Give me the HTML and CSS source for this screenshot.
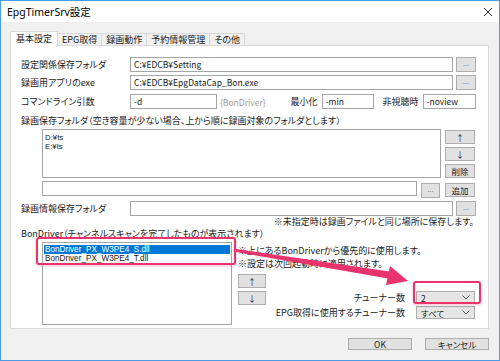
FILE: index.html
```html
<!DOCTYPE html>
<html lang="ja">
<head>
<meta charset="utf-8">
<link rel="stylesheet" href="styles.css">
</head>
<body>
<div class="win">
  <div class="titlebar">
    <span class="title">EpgTimerSrv設定</span>
    <svg class="close" width="10" height="10" viewBox="0 0 10 10"><path d="M1 1L9 9M9 1L1 9" stroke="#222" stroke-width="1"/></svg>
  </div>
  <div class="client">
    <div class="tabs">
      <div class="tab active">基本設定</div>
      <div class="tab">EPG取得</div>
      <div class="tab">録画動作</div>
      <div class="tab">予約情報管理</div>
      <div class="tab">その他</div>
    </div>
    <div class="panel">
      <div class="row r1">
        <span class="lbl">設定関係保存フォルダ</span>
        <div class="input path">C:¥EDCB¥Setting</div>
        <div class="btn dots">...</div>
      </div>
      <div class="row r2">
        <span class="lbl">録画用アプリのexe</span>
        <div class="input path">C:¥EDCB¥EpgDataCap_Bon.exe</div>
        <div class="btn dots">...</div>
      </div>
      <div class="row r3">
        <span class="lbl">コマンドライン引数</span>
        <div class="input arg">-d</div>
        <span class="gray">{BonDriver}</span>
        <span class="lbl2 minlbl">最小化</span>
        <div class="input small">-min</div>
        <span class="lbl2 nvlbl">非視聴時</span>
        <div class="input small2">-noview</div>
      </div>
      <div class="heading h1">録画保存フォルダ（空き容量が少ない場合、上から順に録画対象のフォルダとします）</div>
      <div class="recarea">
        <div class="recleft">
          <div class="listbox reclist">
            <div class="item">D:¥ts</div>
            <div class="item">E:¥ts</div>
          </div>
          <div class="addrow">
            <div class="input addinput"></div>
            <div class="btn dots">...</div>
          </div>
        </div>
        <div class="recbtns">
          <div class="btn side">↑</div>
          <div class="btn side">↓</div>
          <div class="btn side">削除</div>
          <div class="btn side add">追加</div>
        </div>
      </div>
      <div class="row r4">
        <span class="lbl">録画情報保存フォルダ</span>
        <div class="input path">&nbsp;</div>
        <div class="btn dots">...</div>
      </div>
      <div class="note">※未指定時は録画ファイルと同じ場所に保存します。</div>
      <div class="heading h2">BonDriver（チャンネルスキャンを完了したものが表示されます）</div>
      <div class="bonarea">
        <div class="listbox bonlist">
          <div class="item sel">BonDriver_PX_W3PE4_S.dll</div>
          <div class="item">BonDriver_PX_W3PE4_T.dll</div>
        </div>
        <div class="bonright">
          <div class="bnote">※上にあるBonDriverから優先的に使用します。</div>
          <div class="bnote">※設定は次回起動時に適用されます。</div>
          <div class="bonlower">
            <div class="bonbtns">
              <div class="btn side2">↑</div>
              <div class="btn side2">↓</div>
            </div>
            <div class="tuners">
              <span class="tlbl">チューナー数</span>
              <div class="combo"><span>2</span><svg width="8" height="5" viewBox="0 0 8 5"><path d="M0.5 0.5L4 4L7.5 0.5" fill="none" stroke="#555" stroke-width="1"/></svg></div>
              <span class="tlbl">EPG取得に使用するチューナー数</span>
              <div class="combo"><span>すべて</span><svg width="8" height="5" viewBox="0 0 8 5"><path d="M0.5 0.5L4 4L7.5 0.5" fill="none" stroke="#555" stroke-width="1"/></svg></div>
            </div>
          </div>
        </div>
      </div>
    </div>
    <div class="footer">
      <div class="btn fbtn">OK</div>
      <div class="btn fbtn">キャンセル</div>
    </div>
  </div>
  <div class="mark mark1"></div>
  <div class="mark mark2"></div>
  <svg class="arrow" width="500" height="361" viewBox="0 0 500 361">
    <polygon points="236,249 236,252 391,279 393,272" fill="#e8336d"/>
    <polygon points="408,281 386,285 390,266" fill="#e8336d"/>
  </svg>
</div>
</body>
</html>
```

FILE: styles.css
```css
* { box-sizing: border-box; margin: 0; padding: 0; }
body {
  margin: 0;
  width: 500px;
  height: 361px;
  overflow: hidden;
  font-family: "Noto Sans CJK JP", sans-serif;
  font-size: 9px;
  color: #1a1a1a;
  font-feature-settings: "palt";
}
.win {
  position: relative;
  width: 500px;
  height: 361px;
  border: 1px solid #4a9be2;
  background: #f0f0f0;
  display: flex;
  flex-direction: column;
}
.titlebar {
  height: 21px;
  flex: none;
  background: #fff;
  display: flex;
  align-items: center;
  justify-content: space-between;
  padding: 0 6px 0 6px;
}
.title {
  font-family: "Noto Sans", "Noto Sans CJK JP", sans-serif;
  font-size: 10.5px;
  color: #000;
}
.client {
  flex: 1;
  padding: 9px 10px 0 9px;
  display: flex;
  flex-direction: column;
}
.tabs {
  display: flex;
  align-items: flex-end;
  height: 14px;
  position: relative;
  z-index: 2;
}
.tab {
  height: 12px;
  padding: 0 4px;
  border: 1px solid #d9d9d9;
  border-bottom: none;
  margin-left: -1px;
  line-height: 11px;
  background: #f0f0f0;
  white-space: nowrap;
}
.tab.active {
  height: 15px;
  margin-left: 0;
  margin-bottom: -1px;
  background: #fff;
  padding: 0 5px;
  line-height: 13px;
}
.panel {
  background: #fff;
  border: 1px solid #d9d9d9;
  height: 284px;
  padding: 11px 12px 0 10px;
  display: flex;
  flex-direction: column;
}
.row {
  display: flex;
  align-items: center;
  height: 15px;
}
.r2 { margin-top: 3px; }
.r3 { margin-top: 4px; }
.lbl {
  width: 109px;
  flex: none;
  white-space: nowrap;
}
.input {
  height: 15px;
  border: 1px solid #a5a5a5;
  background: #fff;
  padding: 0 3px;
  line-height: 13px;
  font-size: 8.5px;
  white-space: nowrap;
  overflow: hidden;
}
.input.path { width: 323px; }
.btn {
  background: #e1e1e1;
  border: 1px solid #adadad;
  display: flex;
  align-items: center;
  justify-content: center;
  white-space: nowrap;
}
.dots {
  width: 20px;
  height: 15px;
  margin-left: 3px;
  font-size: 7px;
  color: #777;
  line-height: 1;
  padding-bottom: 3px;
}
.input.arg { width: 87px; }
.gray { color: #a0a0a0; margin-left: 3px; font-size: 8.5px; }
.minlbl { margin-left: 25px; }
.input.small { width: 52px; margin-left: 4px; }
.nvlbl { margin-left: 9px; }
.input.small2 { width: 53px; margin-left: 4px; }
.heading {
  height: 11px;
  line-height: 11px;
  white-space: nowrap;
}
.h1 { margin-top: 6px; }
.recarea {
  display: flex;
  margin-top: 3px;
  margin-left: 21px;
}
.listbox {
  border: 1px solid #a5a5a5;
  background: #fff;
  padding: 1px;
}
.item {
  height: 9px;
  line-height: 9px;
  padding-left: 1px;
  white-space: nowrap;
  font-family: "Liberation Sans", "Noto Sans CJK JP", sans-serif;
  font-size: 8.2px;
}
.reclist {
  width: 399px;
  height: 49px;
  padding-top: 3px;
}
.reclist .item { font-size: 7.8px; }
.addrow {
  display: flex;
  margin-top: 3px;
}
.addinput { width: 375px; height: 15px; }
.addrow .dots { margin-left: 4px; width: 19px; margin-top: 2px; }
.recbtns {
  margin-left: 4px;
  display: flex;
  flex-direction: column;
  gap: 3px;
  padding-top: 1px;
}
.side {
  width: 30px;
  height: 14px;
  font-size: 8.5px;
}
.side.add { margin-top: 2px; }
.r4 { margin-top: 3px; }
.note {
  text-align: right;
  padding-right: 2px;
  height: 12px;
  line-height: 12px;
  white-space: nowrap;
}
.h2 { margin-top: 0; }
.bonarea {
  display: flex;
  margin-left: 21px;
  margin-top: 3px;
}
.bonlist {
  width: 190px;
  height: 83px;
  flex: none;
  padding-top: 2px;
}
.item.sel {
  background: #0078d7;
  color: #fff;
}
.bonright {
  flex: 1;
  padding-left: 6px;
  padding-top: 2px;
}
.bnote {
  height: 13px;
  line-height: 13px;
  white-space: nowrap;
}
.bonlower {
  display: flex;
  margin-top: 4px;
}
.bonbtns {
  display: flex;
  flex-direction: column;
  gap: 3px;
}
.side2 {
  width: 28px;
  height: 14px;
  font-size: 8.5px;
}
.tuners {
  flex: 1;
  display: grid;
  grid-template-columns: 1fr 59px;
  column-gap: 11px;
  row-gap: 2px;
  padding-top: 17px;
  padding-right: 1px;
  align-items: center;
}
.tlbl {
  text-align: right;
  white-space: nowrap;
}
.combo {
  height: 13px;
  border: 1px solid #adadad;
  background: #e5e5e5;
  display: flex;
  align-items: center;
  justify-content: space-between;
  padding: 0 4px 0 4px;
  font-size: 8.5px;
}
.footer {
  display: flex;
  justify-content: flex-end;
  gap: 13px;
  padding-top: 9px;
}
.fbtn {
  width: 64px;
  height: 12px;
  font-size: 8.5px;
}
.mark {
  position: absolute;
  border: 2px solid #e8336d;
  border-radius: 3px;
  box-shadow: 0 1px 3px rgba(232, 51, 109, 0.35);
}
.mark1 { left: 35px; top: 236px; width: 200px; height: 28px; }
.mark2 { left: 412px; top: 280px; width: 68px; height: 23px; }
.arrow {
  position: absolute;
  left: -1px;
  top: -1px;
  pointer-events: none;
}
```
